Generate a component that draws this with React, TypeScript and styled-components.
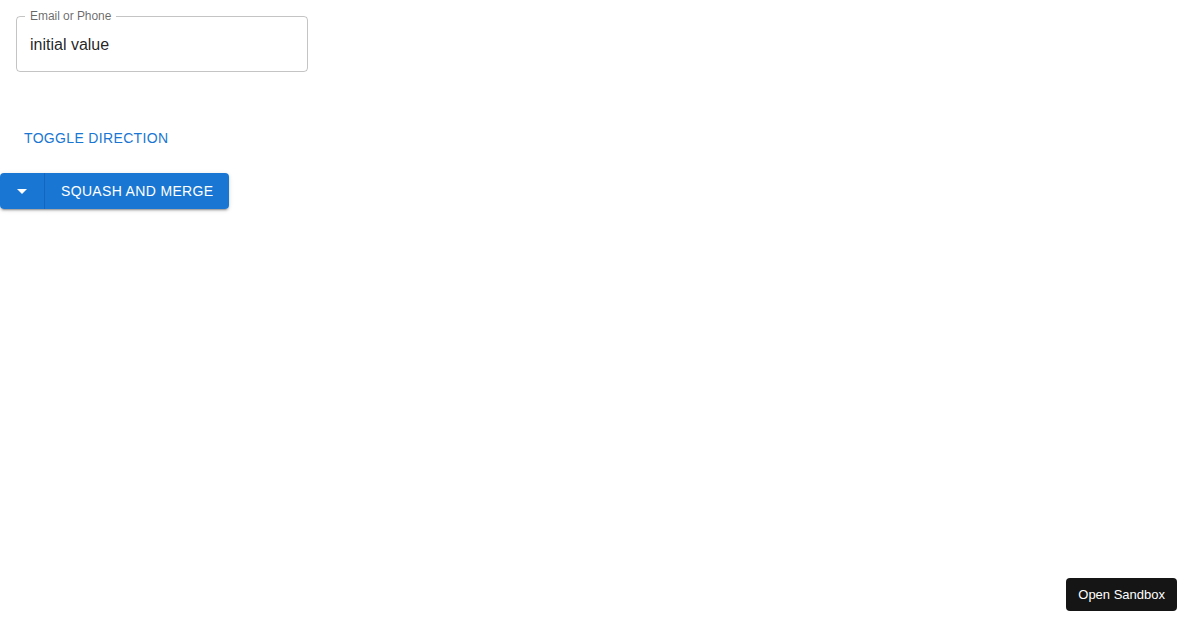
import React, {useState} from 'react';
import styled, {createGlobalStyle} from 'styled-components';

const Global = createGlobalStyle`
  html, body {
    margin: 0;
    background: #ffffff;
    font-family: "Liberation Sans", Arial, sans-serif;
  }
`;

const Page = styled.div`
  display: flex;
  flex-direction: column;
  align-items: flex-start;
  min-height: 630px;
`;

const Field = styled.fieldset`
  margin: 10px 0 0 16px;
  padding: 0;
  width: 292px;
  box-sizing: border-box;
  border: 1px solid rgba(0, 0, 0, 0.23);
  border-radius: 4px;
  min-width: 0;

  > legend {
    margin-left: 8px;
    padding: 0 5px;
    font-size: 12px;
    line-height: 12px;
    letter-spacing: -0.05px;
    color: rgba(0, 0, 0, 0.6);
  }

  > input {
    display: block;
    width: 100%;
    box-sizing: border-box;
    border: none;
    outline: none;
    background: transparent;
    font: 400 16px/23px "Liberation Sans", Arial, sans-serif;
    color: rgba(0, 0, 0, 0.87);
    padding: 11px 13px 15px;
  }
`;

const TextButton = styled.button`
  margin: 48px 0 0 16px;
  border: none;
  background: none;
  padding: 6px 8px;
  font: 500 14px/24.5px "Liberation Sans", Arial, sans-serif;
  letter-spacing: 0.34px;
  text-transform: uppercase;
  color: #1976d2;
  border-radius: 4px;
  cursor: pointer;
`;

const Group = styled.div`
  margin-top: 16px;
  display: inline-flex;
  border-radius: 4px;
  box-shadow: 0px 3px 1px -2px rgba(0,0,0,0.2), 0px 2px 2px 0px rgba(0,0,0,0.14), 0px 1px 5px 0px rgba(0,0,0,0.12);
`;

const GroupButton = styled.button<{$icon?: boolean}>`
  display: flex;
  align-items: center;
  justify-content: center;
  border: none;
  background: #1976d2;
  color: #ffffff;
  height: 36.5px;
  padding: ${p => (p.$icon ? '0 10px' : '6px 16px')};
  font: 500 14px/24.5px "Liberation Sans", Arial, sans-serif;
  letter-spacing: 0.34px;
  text-transform: uppercase;
  cursor: pointer;

  &:first-child {
    border-radius: 4px 0 0 4px;
    border-right: 1px solid #1565c0;
  }

  &:last-child {
    border-radius: 0 4px 4px 0;
  }
`;

const SandboxLink = styled.a`
  position: fixed;
  right: 23px;
  bottom: 19px;
  background: #151515;
  color: #ffffff;
  font: 400 13px/1 "Liberation Sans", Arial, sans-serif;
  padding: 10px 12px;
  border-radius: 4px;
  text-decoration: none;
`;

const ArrowDrop = () => (
    <svg width="24" height="24" viewBox="0 0 24 24" fill="currentColor">
        <path d="M7 10l5 5 5-5z"/>
    </svg>
);

const App: React.FunctionComponent = () => {
    const [value, setValue] = useState('initial value');
    const [vertical, setVertical] = useState(false);
    return (
        <Page>
            <Global/>
            <Field>
                <legend>Email or Phone</legend>
                <input value={value} onChange={e => setValue(e.target.value)}/>
            </Field>
            <TextButton onClick={() => setVertical(!vertical)}>Toggle direction</TextButton>
            <Group style={{flexDirection: vertical ? 'column' : 'row'}}>
                <GroupButton $icon><ArrowDrop/></GroupButton>
                <GroupButton>Squash and merge</GroupButton>
            </Group>
            <SandboxLink href="#">Open Sandbox</SandboxLink>
        </Page>
    );
};

export default App;
